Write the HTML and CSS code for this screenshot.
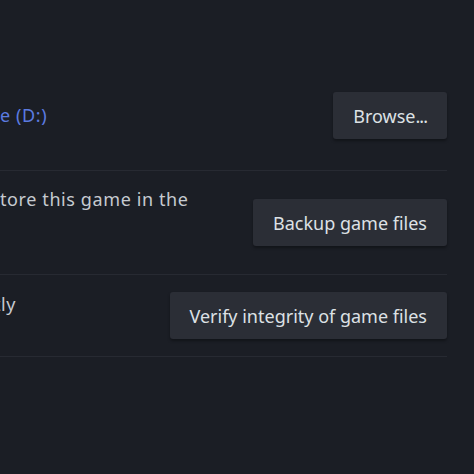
FILE: index.html
```html
<!DOCTYPE html>
<html lang="en">
<head>
<meta charset="utf-8">
<title>Installed Files</title>
<link rel="stylesheet" href="styles.css">
</head>
<body>
<main class="panel">
  <section class="row row-folder">
    <div class="info">
      <div class="line"><span class="link">e (D:)</span></div>
    </div>
    <button class="btn">Browse<span class="dots">...</span></button>
  </section>
  <section class="row">
    <div class="info three-lines">
      <div class="line">tore this game in the</div>
    </div>
    <button class="btn">Backup game files</button>
  </section>
  <section class="row">
    <div class="info two-lines">
      <div class="line cut">tly</div>
    </div>
    <button class="btn">Verify integrity of game files</button>
  </section>
</main>
</body>
</html>
```

FILE: styles.css
```css
html, body {
  margin: 0;
  padding: 0;
  background: #1b1e25;
  overflow: hidden;
}

body {
  width: 474px;
  height: 474px;
  font-family: "Noto Sans", "Open Sans", sans-serif;
  font-size: 18px;
  color: #c6cad0;
}

.panel {
  padding: 75px 27px 0 0;
}

.row {
  display: flex;
  align-items: center;
  gap: 24px;
  padding: 17px 0;
  border-bottom: 1px solid #272a32;
}

.row-folder {
  padding-bottom: 31px;
}

.info {
  flex: 1;
  min-width: 0;
  line-height: 23px;
  letter-spacing: 0.6px;
  white-space: nowrap;
  overflow: hidden;
}

.three-lines {
  min-height: 69px;
}

.two-lines {
  min-height: 46px;
}

.cut {
  text-indent: -6px;
}

.link {
  color: #5b7be0;
}

.btn {
  flex-shrink: 0;
  height: 47px;
  padding: 0 20px;
  border: none;
  border-radius: 3px;
  background: #2b2e36;
  color: #dde1e5;
  font-family: inherit;
  font-size: 18px;
  box-shadow: 0 2px 3px rgba(0, 0, 0, 0.35);
}

.dots {
  letter-spacing: -1px;
}
```
